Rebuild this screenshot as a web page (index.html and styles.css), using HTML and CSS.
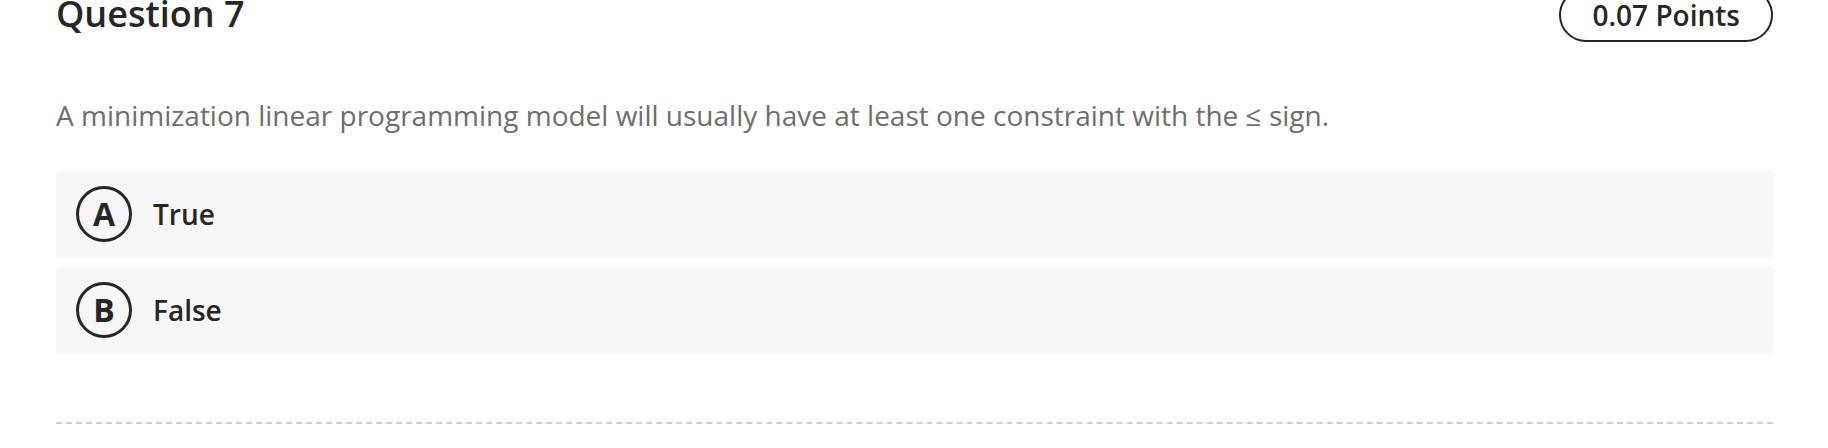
FILE: index.html
```html
<!DOCTYPE html>
<html>
<head>
<meta charset="utf-8">
<link rel="stylesheet" href="styles.css">
</head>
<body>
<div class="question">
  <div class="q-header">
    <h2 class="q-title">Question 7</h2>
    <div class="q-points">0.07 Points</div>
  </div>
  <p class="q-text">A minimization linear programming model will usually have at least one constraint with the ≤ sign.</p>
  <div class="options">
    <div class="option"><span class="letter">A</span><span class="label">True</span></div>
    <div class="option"><span class="letter">B</span><span class="label">False</span></div>
  </div>
  <div class="divider"></div>
</div>
</body>
</html>
```
FILE: styles.css
```css
* { box-sizing: border-box; }
html, body { margin: 0; padding: 0; background: #fff; }
body { font-family: "Open Sans", "Liberation Sans", sans-serif; color: #262626; }
.question { padding: 0 55px 0 56px; margin-top: -12px; }
.q-header { display: flex; justify-content: space-between; align-items: flex-start; }
.q-title { margin: 0; padding-top: 2px; font-size: 36px; font-weight: 600; line-height: 48px; }
.q-points {
  font-size: 28px; font-weight: 600; line-height: 36px;
  border: 2px solid #262626; border-radius: 30px;
  padding: 7px 31px;
}
.q-text { margin: 54px 0 0 0; font-size: 28px; line-height: 38px; color: #6e6e6e; }
.options { display: flex; flex-direction: column; gap: 8px; margin-top: 36px; }
.option {
  display: flex; align-items: center; gap: 21px;
  height: 88px; padding: 0 20px; background: #f7f7f7; border-radius: 4px;
}
.letter {
  flex: none;
  width: 56px; height: 56px; border: 3px solid #262626; border-radius: 50%;
  display: flex; align-items: center; justify-content: center;
  font-size: 32px; font-weight: 700; line-height: 1;
}
.label { font-size: 28px; font-weight: 600; }
.divider { margin-top: 68px; border-top: 2px dashed #cfcfcf; }
```
